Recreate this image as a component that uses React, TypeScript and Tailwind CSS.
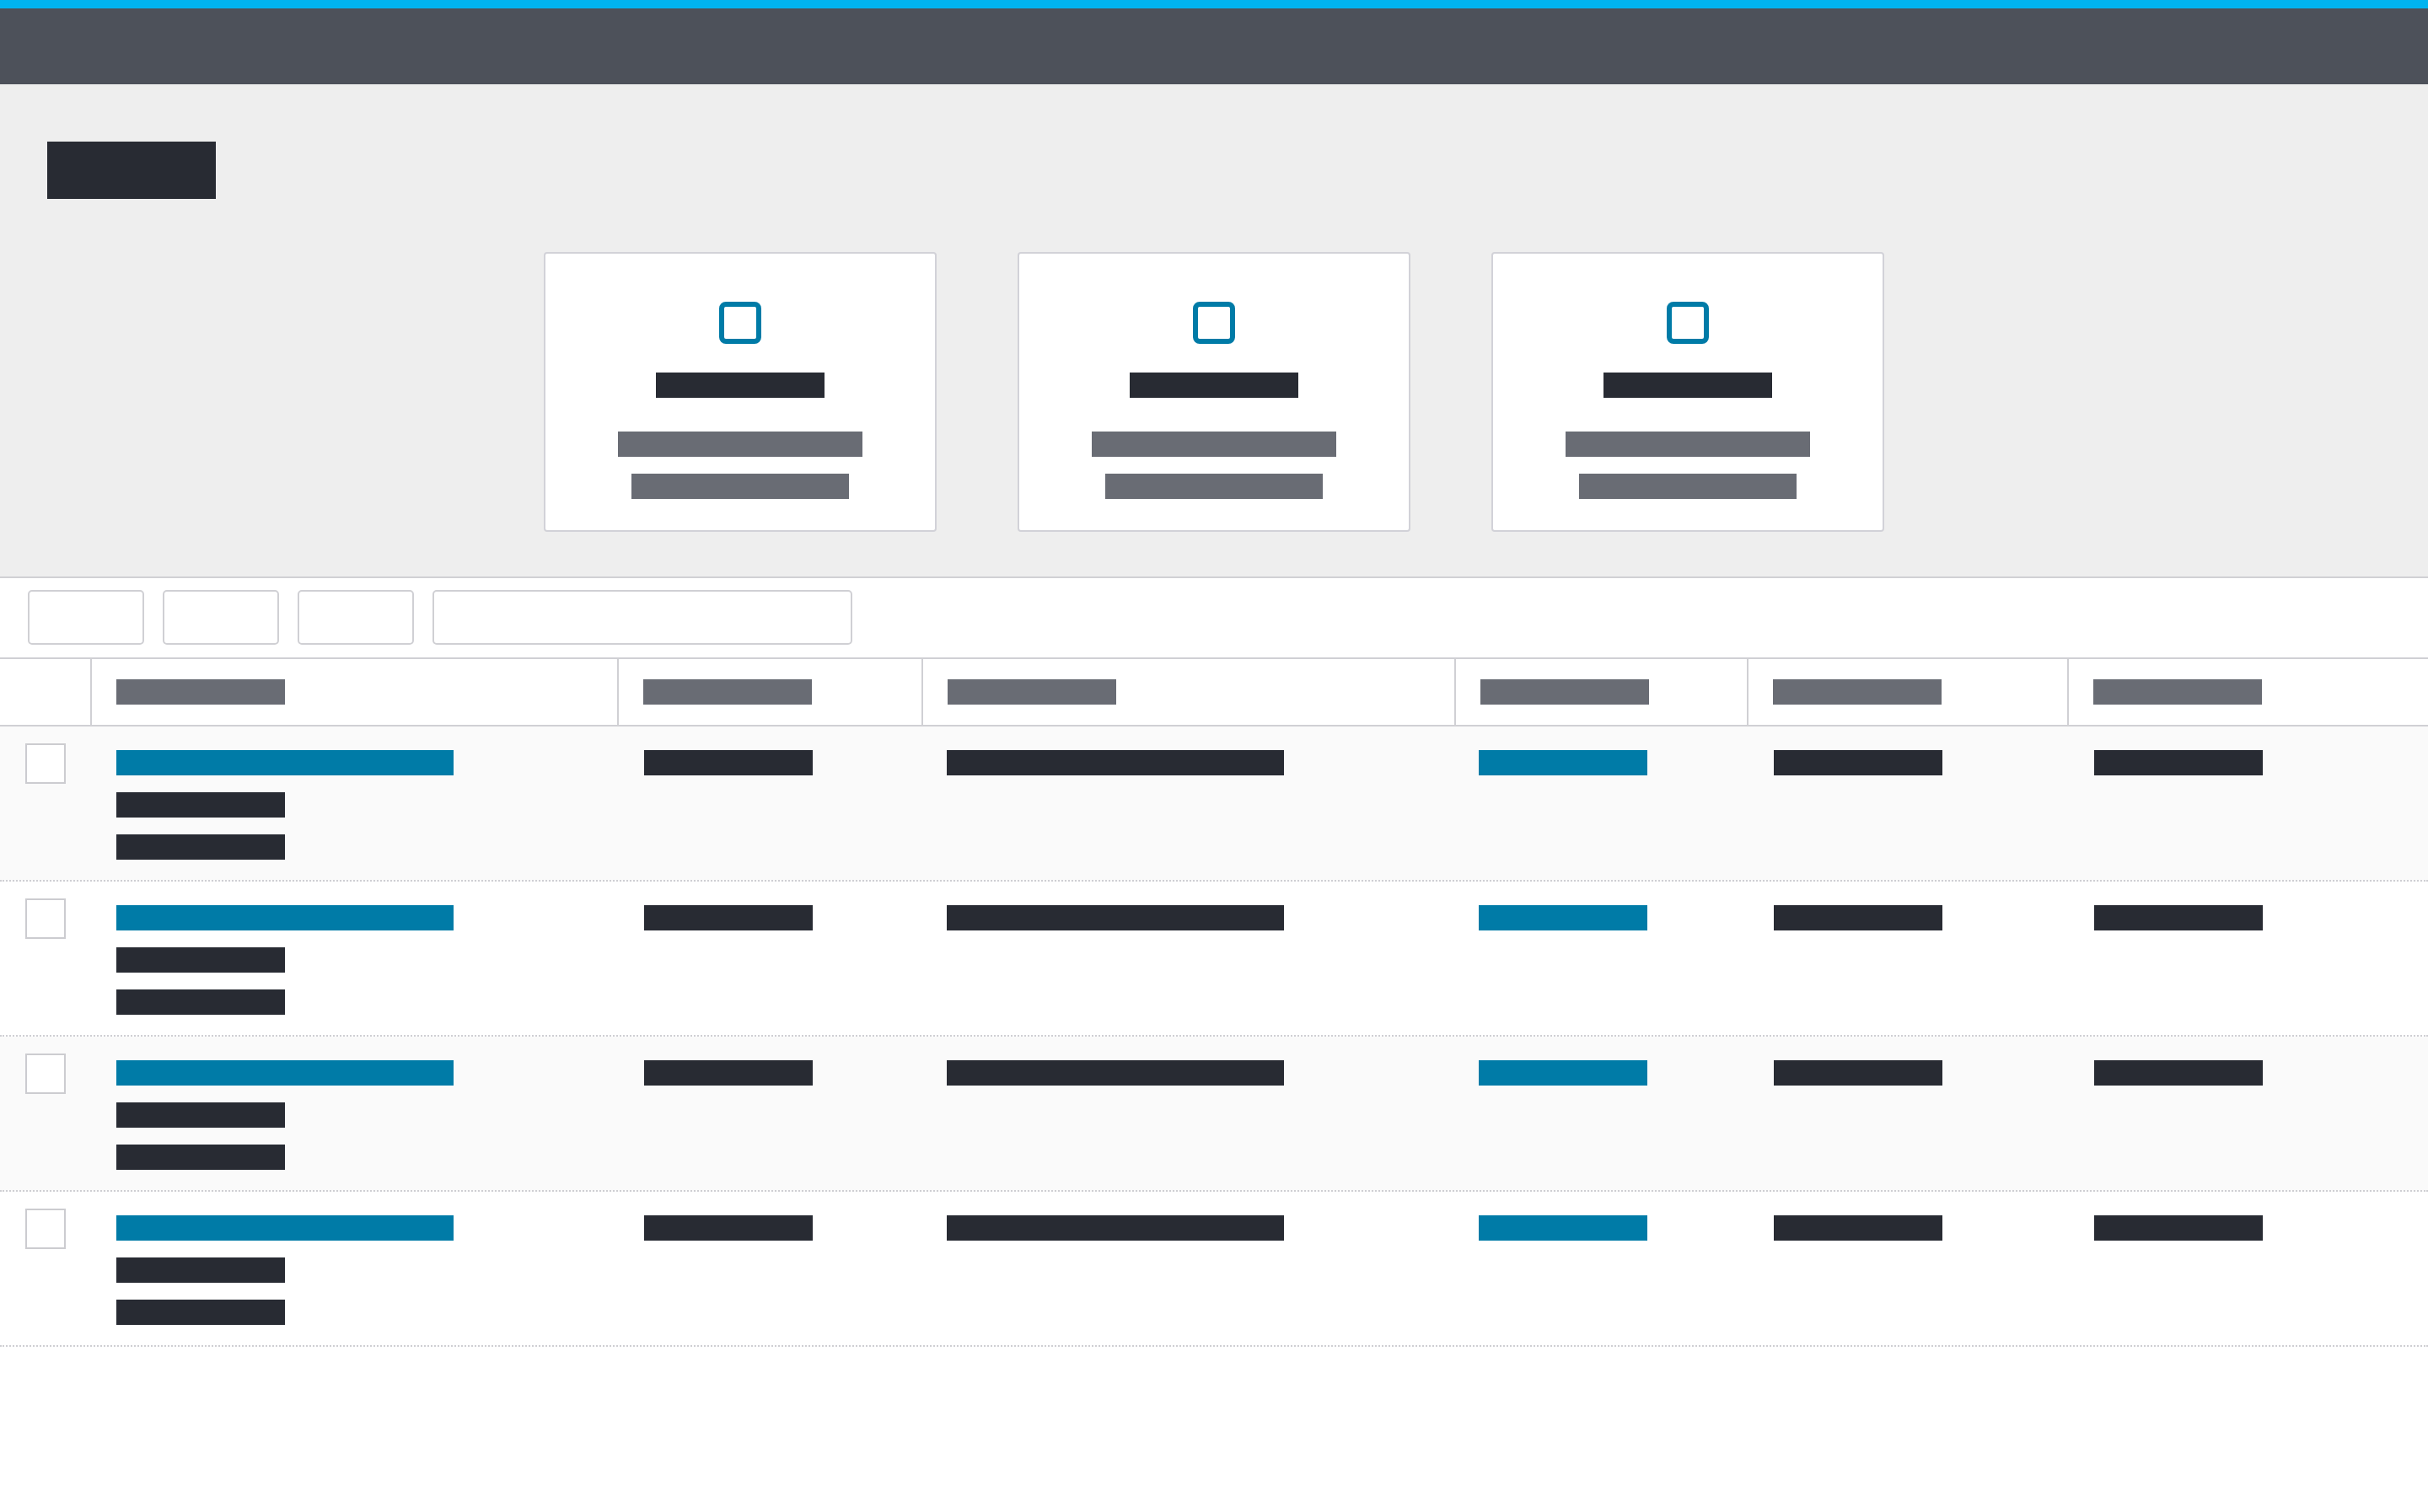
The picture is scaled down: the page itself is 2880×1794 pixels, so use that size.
const columns = "grid grid-cols-[107px_625px_361px_632px_347px_380px_1fr]";

const rows = [
  { striped: true },
  { striped: false },
  { striped: true },
  { striped: false },
];

function Bar({ className }: { className: string }) {
  return <div className={`h-[30px] ${className}`} />;
}

function StatCard() {
  return (
    <div className="w-[466px] h-[332px] bg-white border-2 border-[#d2d2d8] rounded-[4px] flex flex-col items-center pt-[57px]">
      <div className="size-[50px] border-[6px] border-[#007ba7] rounded-[8px]" />
      <Bar className="w-[200px] bg-[#282b33] mt-[34px]" />
      <Bar className="w-[290px] bg-[#696c74] mt-[40px]" />
      <Bar className="w-[258px] bg-[#696c74] mt-[20px]" />
    </div>
  );
}

function HeaderCell() {
  return (
    <div className="h-[78px] pl-[29px] border-l-2 border-[#d0d0d4] flex items-center">
      <Bar className="w-[200px] bg-[#696c74]" />
    </div>
  );
}

function TableRow({ striped }: { striped: boolean }) {
  return (
    <div
      className={`${columns} h-[184px] border-b-2 border-dotted border-[#cfcfd3] ${
        striped ? "bg-[#fafafa]" : "bg-white"
      }`}
    >
      <div className="pl-[30px] pt-[20px]">
        <div className="size-[48px] bg-white border-2 border-[#ccccd0]" />
      </div>
      <div className="pl-[31px] pt-[28px] flex flex-col gap-[20px]">
        <Bar className="w-[400px] bg-[#007ba7]" />
        <Bar className="w-[200px] bg-[#282b33]" />
        <Bar className="w-[200px] bg-[#282b33]" />
      </div>
      <div className="pl-[32px] pt-[28px]">
        <Bar className="w-[200px] bg-[#282b33]" />
      </div>
      <div className="pl-[30px] pt-[28px]">
        <Bar className="w-[400px] bg-[#282b33]" />
      </div>
      <div className="pl-[29px] pt-[28px]">
        <Bar className="w-[200px] bg-[#007ba7]" />
      </div>
      <div className="pl-[32px] pt-[28px]">
        <Bar className="w-[200px] bg-[#282b33]" />
      </div>
      <div className="pl-[32px] pt-[28px]">
        <Bar className="w-[200px] bg-[#282b33]" />
      </div>
    </div>
  );
}

export default function App() {
  return (
    <div className="min-h-screen bg-white font-['Liberation_Sans',sans-serif]">
      <div className="h-[10px] bg-[#00b4f0]" />
      <header className="h-[90px] bg-[#4d515a]" />

      <section className="bg-[#eeeeee] px-[56px] pt-[68px] pb-[53px] border-b-2 border-[#d0d0d4]">
        <div className="w-[200px] h-[68px] bg-[#282b33]" />
        <div className="mt-[63px] flex justify-center gap-[96px]">
          <StatCard />
          <StatCard />
          <StatCard />
        </div>
      </section>

      <div className="h-[94px] pl-[33px] pt-[14px] flex gap-[22px] items-start">
        <div className="w-[138px] h-[65px] border-2 border-[#d0d0d4] rounded-[5px]" />
        <div className="w-[138px] h-[65px] border-2 border-[#d0d0d4] rounded-[5px]" />
        <div className="w-[138px] h-[65px] border-2 border-[#d0d0d4] rounded-[5px]" />
        <div className="w-[498px] h-[65px] border-2 border-[#d0d0d4] rounded-[5px]" />
      </div>

      <div className={`${columns} border-y-2 border-[#d0d0d4] bg-white`}>
        <div className="h-[78px]" />
        <HeaderCell />
        <HeaderCell />
        <HeaderCell />
        <HeaderCell />
        <HeaderCell />
        <HeaderCell />
      </div>

      {rows.map((row, i) => (
        <TableRow key={i} striped={row.striped} />
      ))}
    </div>
  );
}
